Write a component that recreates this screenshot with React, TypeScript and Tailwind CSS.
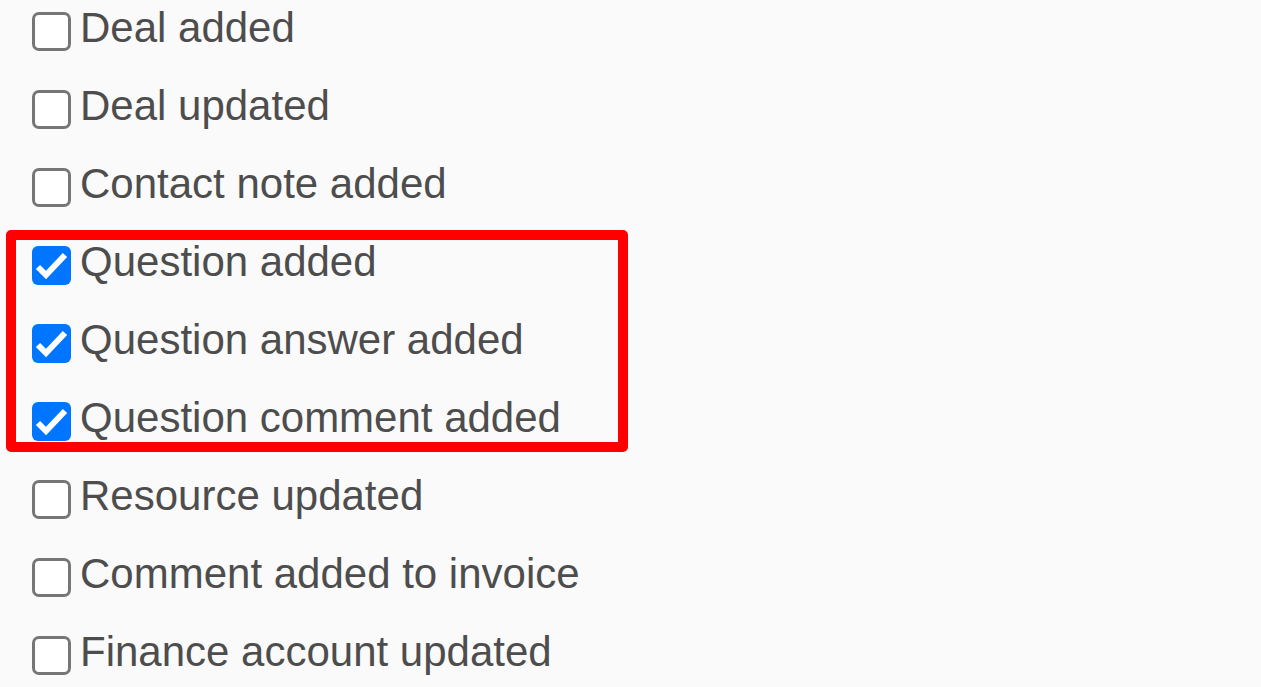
const items = [
  { label: "Deal added", checked: false },
  { label: "Deal updated", checked: false },
  { label: "Contact note added", checked: false },
  { label: "Question added", checked: true },
  { label: "Question answer added", checked: true },
  { label: "Question comment added", checked: true },
  { label: "Resource updated", checked: false },
  { label: "Comment added to invoice", checked: false },
  { label: "Finance account updated", checked: false },
];

const Box = ({ checked }: { checked: boolean }) => {
  if (checked) {
    return (
      <span className="relative top-[3px] flex h-[39px] w-[39px] shrink-0 items-center justify-center rounded-[6px] bg-[#0075ff]">
        <svg width="39" height="39" viewBox="0 0 39 39">
          <polyline
            points="6,21 14,29 33,9"
            fill="none"
            stroke="#fff"
            strokeWidth="6"
          />
        </svg>
      </span>
    );
  }
  return (
    <span className="relative top-[3px] block h-[39px] w-[39px] shrink-0 rounded-[7px] border-[3px] border-[#767676] bg-white" />
  );
};

const Row = ({ label, checked }: { label: string; checked: boolean }) => (
  <label className="flex h-[78px] items-center">
    <Box checked={checked} />
    <span className="ml-[9px] text-[42px] leading-[48px] text-[#4d4d4d]">
      {label}
    </span>
  </label>
);

export default function App() {
  return (
    <div
      className="h-[687px] w-[1261px] overflow-hidden bg-[#fafafa]"
      style={{ fontFamily: '"Liberation Sans", Arial, sans-serif' }}
    >
      <div className="-mt-[11px] pl-[32px]">
        {items.slice(0, 3).map((it) => (
          <Row key={it.label} {...it} />
        ))}
        {/* highlight frame */}
        <div className="-ml-[26px] mt-[7px] mb-[5px] w-[622px] rounded-[5px] border-[10px] border-[#ff0000] pl-[16px]">
          <div className="-mt-[17px] -mb-[15px]">
            {items.slice(3, 6).map((it) => (
              <Row key={it.label} {...it} />
            ))}
          </div>
        </div>
        {items.slice(6).map((it) => (
          <Row key={it.label} {...it} />
        ))}
      </div>
    </div>
  );
}
